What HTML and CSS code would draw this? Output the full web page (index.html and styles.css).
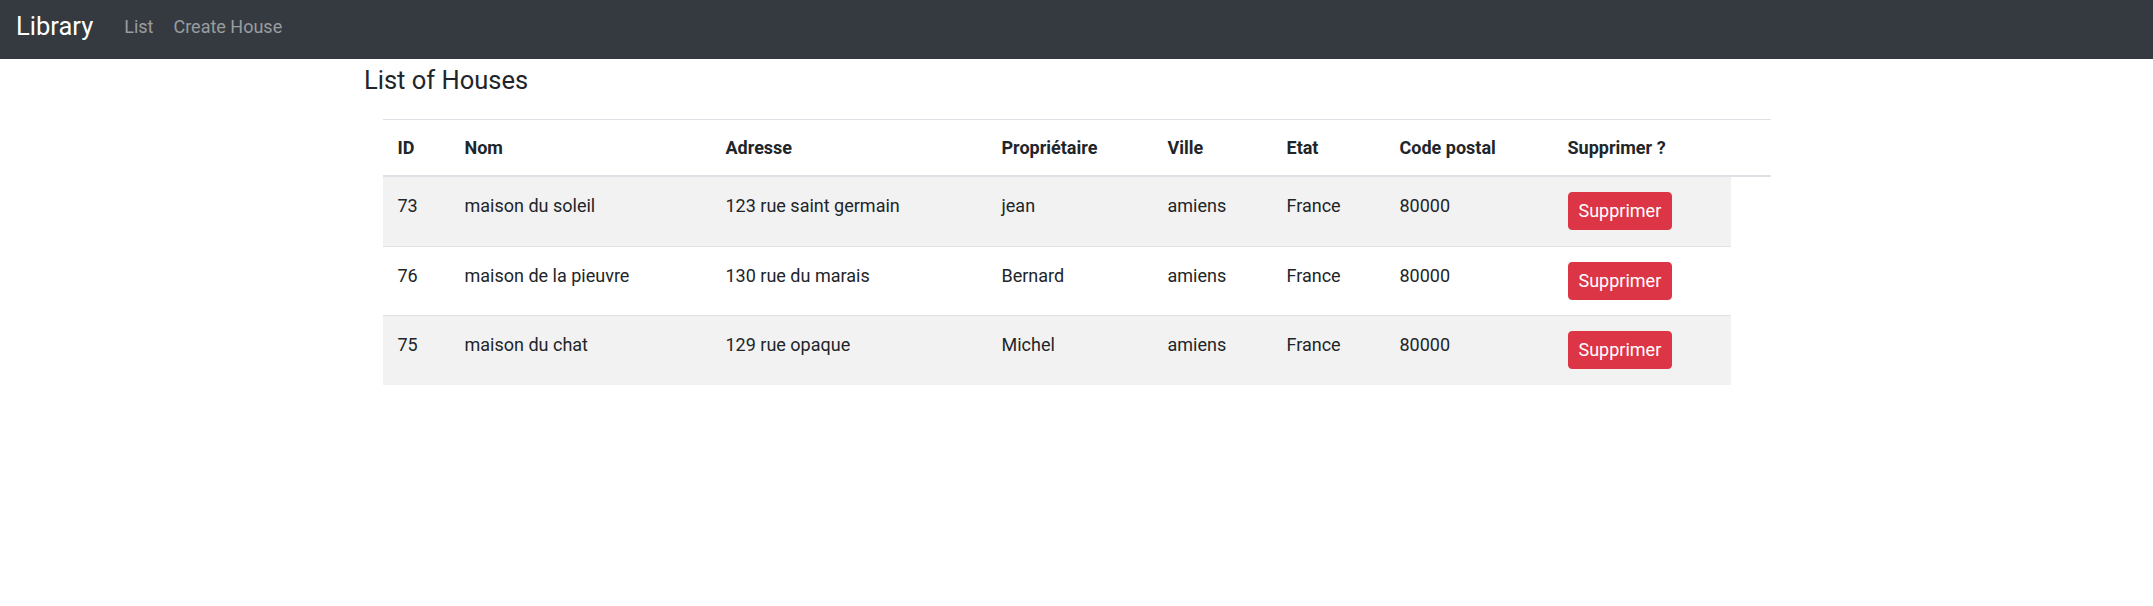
FILE: index.html
```html
<!DOCTYPE html>
<html lang="fr">
<head>
<meta charset="utf-8">
<title>Library</title>
<link rel="stylesheet" href="styles.css">
</head>
<body>
<nav class="navbar">
  <a class="brand" href="#">Library</a>
  <ul class="nav">
    <li><a class="nav-link" href="#">List</a></li>
    <li><a class="nav-link" href="#">Create House</a></li>
  </ul>
</nav>
<main class="container">
  <h1 class="title">List of Houses</h1>
  <table class="houses">
    <colgroup>
      <col class="c-id"><col class="c-nom"><col class="c-adr"><col class="c-prop"><col class="c-ville"><col class="c-etat"><col class="c-cp"><col class="c-del"><col class="c-extra">
    </colgroup>
    <thead>
      <tr>
        <th>ID</th><th>Nom</th><th>Adresse</th><th>Propriétaire</th><th>Ville</th><th>Etat</th><th>Code postal</th><th>Supprimer ?</th><th></th>
      </tr>
    </thead>
    <tbody>
      <tr>
        <td>73</td><td>maison du soleil</td><td>123 rue saint germain</td><td>jean</td><td>amiens</td><td>France</td><td>80000</td><td><button class="btn-danger">Supprimer</button></td>
      </tr>
      <tr>
        <td>76</td><td>maison de la pieuvre</td><td>130 rue du marais</td><td>Bernard</td><td>amiens</td><td>France</td><td>80000</td><td><button class="btn-danger">Supprimer</button></td>
      </tr>
      <tr>
        <td>75</td><td>maison du chat</td><td>129 rue opaque</td><td>Michel</td><td>amiens</td><td>France</td><td>80000</td><td><button class="btn-danger">Supprimer</button></td>
      </tr>
    </tbody>
  </table>
</main>
</body>
</html>
```

FILE: styles.css
```css
* { box-sizing: border-box; }

body {
  margin: 0;
  font-family: Roboto, "Liberation Sans", sans-serif;
  font-size: 18px;
  line-height: 1.5;
  color: #212529;
  background: #fff;
}

.navbar {
  height: 59px;
  background: #343a40;
  display: flex;
  align-items: center;
  padding: 0 16px 6px;
}

.brand {
  font-size: 25.5px;
  line-height: 37px;
  color: #fff;
  text-decoration: none;
  margin-right: 21px;
}

.nav {
  display: flex;
  list-style: none;
  margin: 0;
  padding: 0;
}

.nav-link {
  display: block;
  padding: 0 10px;
  color: rgba(255, 255, 255, 0.5);
  text-decoration: none;
  font-size: 18px;
  line-height: 27px;
}

.container {
  width: 1425px;
  margin: 0 auto;
}

.title {
  margin: 6px 0 24px;
  font-size: 25.5px;
  font-weight: 400;
  line-height: 30px;
}

.houses {
  width: 1388px;
  margin: 0 auto;
  border-collapse: collapse;
  table-layout: fixed;
}

.c-id { width: 67px; }
.c-nom { width: 261px; }
.c-adr { width: 276px; }
.c-prop { width: 166px; }
.c-ville { width: 119px; }
.c-etat { width: 113px; }
.c-cp { width: 168px; }
.c-del { width: 178px; }
.c-extra { width: 40px; }

.houses th {
  text-align: left;
  font-weight: 700;
  padding: 14px 15px;
  border-top: 1px solid #dee2e6;
  border-bottom: 2px solid #dee2e6;
  vertical-align: bottom;
}

.houses td {
  padding: 15px 15px 15.5px;
  border-top: 1px solid #dee2e6;
  vertical-align: top;
}

.houses tbody tr:nth-child(odd) {
  background: #f2f2f2;
}

.btn-danger {
  display: inline-block;
  font-family: inherit;
  font-size: 18px;
  line-height: 26px;
  padding: 5px 10px;
  color: #fff;
  background: #dc3545;
  border: 1px solid #dc3545;
  border-radius: 4px;
  cursor: pointer;
}
```
